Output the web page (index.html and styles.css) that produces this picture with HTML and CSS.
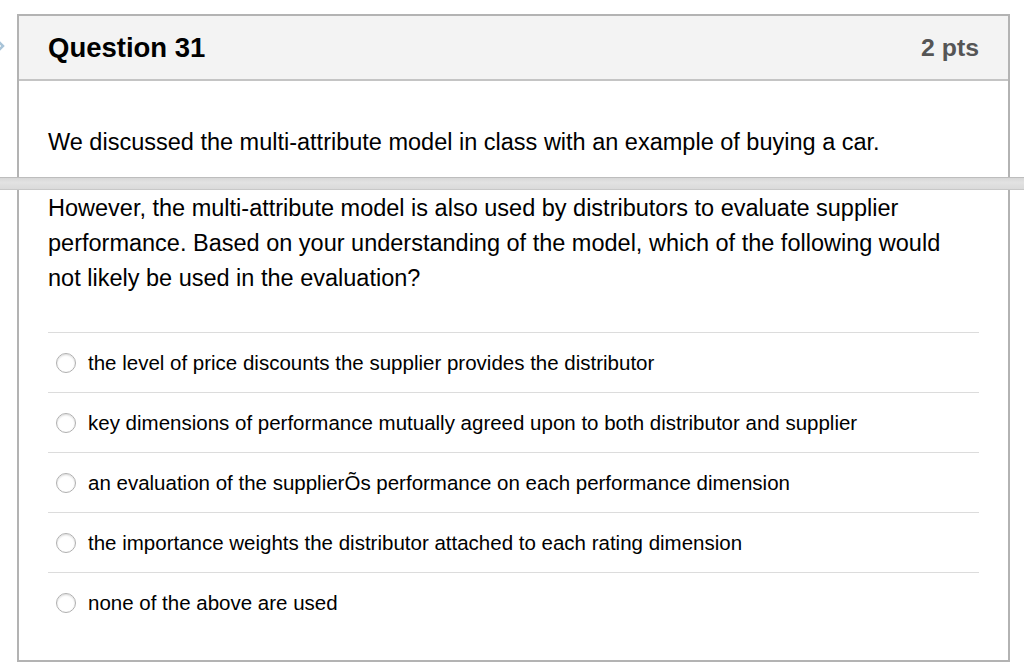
FILE: index.html
```html
<!DOCTYPE html>
<html>
<head>
<meta charset="utf-8">
<link rel="stylesheet" href="styles.css">
</head>
<body>
<div class="page">
  <svg class="nav-arrow" width="8" height="20" viewBox="0 0 8 20"><path d="M-4 3 L3 10 L-4 17" fill="none" stroke="#a9c4d8" stroke-width="2.5"/></svg>
  <div class="card">
    <div class="header">
      <div class="title">Question 31</div>
      <div class="pts">2 pts</div>
    </div>
    <div class="body">
      <p class="intro">We discussed the multi-attribute model in class with an example of buying a car.</p>
      <p class="question">However, the multi-attribute model is also used by distributors to evaluate supplier performance. Based on your understanding of the model, which of the following would not likely be used in the evaluation?</p>
      <div class="answers">
        <div class="answer"><span class="radio"></span><span>the level of price discounts the supplier provides the distributor</span></div>
        <div class="answer"><span class="radio"></span><span>key dimensions of performance mutually agreed upon to both distributor and supplier</span></div>
        <div class="answer"><span class="radio"></span><span>an evaluation of the supplierÕs performance on each performance dimension</span></div>
        <div class="answer"><span class="radio"></span><span>the importance weights the distributor attached to each rating dimension</span></div>
        <div class="answer"><span class="radio"></span><span>none of the above are used</span></div>
      </div>
    </div>
  </div>
  <div class="seam"></div>
</div>
</body>
</html>
```
FILE: styles.css
```css
html, body {
  margin: 0;
  padding: 0;
  background: #ffffff;
}
body {
  font-family: "Liberation Sans", Arial, sans-serif;
  color: #000;
  width: 1024px;
  height: 666px;
  overflow: hidden;
}
.page {
  position: relative;
  padding: 14px 0 0 17px;
}
.nav-arrow {
  position: absolute;
  left: 0;
  top: 36px;
}
.card {
  width: 989px;
  height: 644px;
  border: 2px solid #b3b3b3;
  box-sizing: content-box;
}
.header {
  display: flex;
  justify-content: space-between;
  align-items: center;
  height: 63px;
  background: #f3f3f3;
  border-bottom: 2px solid #c4c4c4;
  padding: 0 29px 0 29px;
}
.title {
  font-weight: bold;
  font-size: 27.5px;
}
.pts {
  font-weight: bold;
  font-size: 24.8px;
  color: #555555;
}
.body {
  padding: 0 29px;
}
.intro {
  margin: 44px 0 0;
  font-size: 23.5px;
  line-height: 35px;
}
.question {
  margin: 31px 0 0;
  font-size: 23.5px;
  line-height: 35px;
}
.answers {
  margin-top: 36px;
}
.answer {
  display: flex;
  align-items: center;
  gap: 12px;
  height: 59px;
  border-top: 1px solid #dcdcdc;
  padding-left: 8px;
  font-size: 20.5px;
}
.radio {
  width: 20px;
  height: 20px;
  border-radius: 50%;
  border: 1.5px solid #b0b0b0;
  box-shadow: inset 0 1px 2px rgba(0,0,0,0.15);
  background: #fff;
  flex: none;
  box-sizing: border-box;
}
.seam {
  position: absolute;
  left: 0;
  top: 177px;
  width: 1024px;
  height: 13px;
  box-sizing: border-box;
  background: linear-gradient(#d7d7d7, #e2e2e2 40%, #dadada);
  border-top: 1px solid #bdbdbd;
  border-bottom: 1px solid #c8c8c8;
}
```
